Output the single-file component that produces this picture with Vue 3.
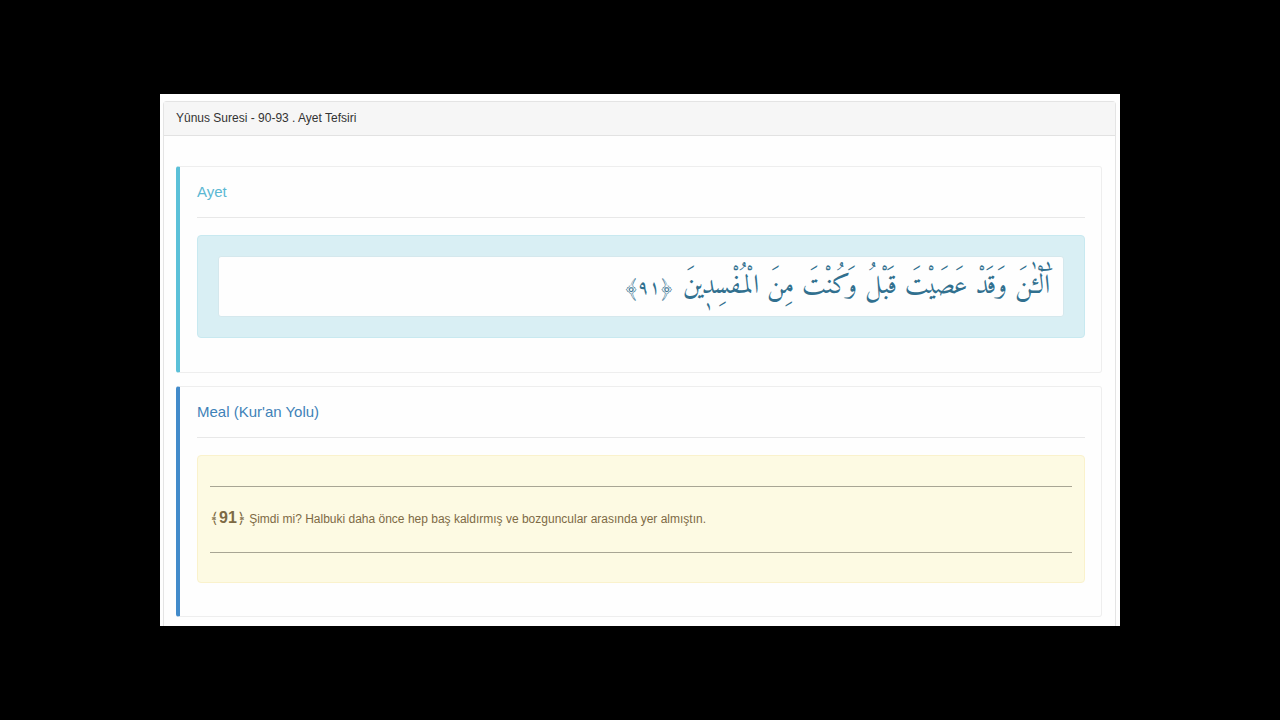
<script setup>
const title = 'Yûnus Suresi - 90-93 . Ayet Tefsiri'
const verse = 'آٰلْـٰٔنَ وَقَدْ عَصَيْتَ قَبْلُ وَكُنْتَ مِنَ الْمُفْسِدٖينَ'
const verseNumber = '﴿٩١﴾'
const meal = 'Şimdi mi? Halbuki daha önce hep baş kaldırmış ve bozguncular arasında yer almıştın.'
</script>

<template>
  <div class="stage">
    <main class="page">
      <article class="panel">
        <header class="panel-heading">{{ title }}</header>
        <div class="panel-body">
          <section class="callout callout-info">
            <h4>Ayet</h4>
            <hr />
            <div class="alert alert-info">
              <p class="verse" lang="ar" dir="rtl">{{ verse }} <span class="verse-number">{{ verseNumber }}</span></p>
            </div>
          </section>
          <section class="callout callout-primary">
            <h4>Meal (Kur'an Yolu)</h4>
            <hr />
            <div class="alert alert-warning">
              <hr />
              <p class="meal"><strong><span class="ornate">﴾</span>91<span class="ornate">﴿</span></strong> {{ meal }}</p>
              <hr />
            </div>
          </section>
        </div>
      </article>
    </main>
  </div>
</template>

<style>
body {
  margin: 0;
  background: #000;
}
</style>

<style scoped>
.stage {
  box-sizing: border-box;
  min-height: 100vh;
  display: flex;
  align-items: center;
  justify-content: center;
  background: #000;
  font-family: "Liberation Sans", Arial, sans-serif;
}
.page {
  box-sizing: border-box;
  width: 75%;
  padding: 7px 4px 0 3px;
  background: #fefefe;
}
.panel {
  border: 1px solid #e4e4e4;
  border-bottom: 0;
  border-radius: 4px 4px 0 0;
}
.panel-heading {
  padding: 8px 12px;
  border-bottom: 1px solid #e2e2e2;
  background: #f6f6f6;
  color: #333;
  font-size: 12px;
  line-height: 17px;
}
.panel-body {
  padding: 30px 13px 9px 12px;
}
.callout {
  padding: 16px 16px 34px 17px;
  border: 1px solid #eee;
  border-left-width: 4px;
  border-radius: 3px;
}
.callout + .callout {
  margin-top: 13px;
}
.callout-info {
  border-left-color: #5bc0d8;
}
.callout-primary {
  padding-bottom: 33px;
  border-left-color: #428bca;
}
h4 {
  margin: 0;
  font-size: 15px;
  font-weight: 400;
  line-height: 17px;
}
.callout-info h4 {
  color: #5bb8d3;
}
.callout-primary h4 {
  color: #3f82b8;
}
hr {
  margin: 17px 0;
  border: 0;
  border-top: 1px solid #e8e8e8;
}
.alert {
  border: 1px solid;
  border-radius: 4px;
}
.alert-info {
  padding: 20px;
  background: #d9eff4;
  border-color: #c8e9f0;
}
.verse {
  margin: 0;
  padding: 0 13px;
  border: 1px solid #d5e8ed;
  border-radius: 3px;
  background: #fefefe;
  color: #31708f;
  font-family: "Amiri", "Scheherazade New", "Noto Naskh Arabic", "DejaVu Sans", serif;
  font-size: 27px;
  line-height: 59px;
}
.verse-number {
  font-size: 20px;
  line-height: 1;
}
.alert-warning {
  padding: 13px 12px 12px;
  background: #fdfae3;
  border-color: #faf2cc;
}
.alert-warning hr {
  border-color: #a8a594;
}
.meal {
  margin: 0;
  color: #7d6a45;
  font-size: 12px;
  line-height: 31px;
}
.meal strong {
  font-size: 16px;
  line-height: 1;
}
.ornate {
  font-family: "DejaVu Sans Condensed", "DejaVu Sans", sans-serif;
  font-size: 15px;
  font-weight: 400;
}
</style>
